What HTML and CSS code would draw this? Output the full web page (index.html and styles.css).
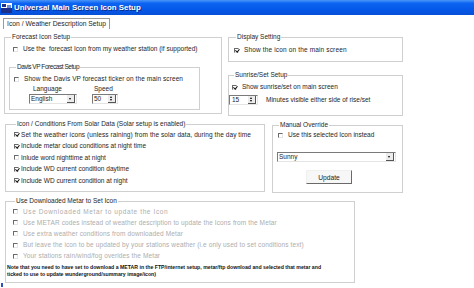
FILE: index.html
```html
<!DOCTYPE html>
<html lang="en">
<head>
    <meta charset="UTF-8">
    <title>Universal Main Screen Icon Setup</title>
    <link rel="stylesheet" href="styles.css">
</head>
<body>
    <div class="titlebar">
        <svg class="app-icon" width="11" height="10" viewBox="0 0 11 10">
            <rect x="0" y="0" width="11" height="10" fill="#fff"/>
            <rect x="0" y="5" width="11" height="5" fill="#1c2f8a"/>
            <path d="M1 1 L5 1 L5 4 L1 4 Z" fill="#1c2f8a"/>
            <path d="M6 2 L10 2 L10 5 L6 5 Z" fill="#6b8fd8"/>
        </svg>
        <span class="title">Universal Main Screen Icon Setup</span>
    </div>

    <div class="tabs">
        <div class="tab">Icon / Weather Description Setup</div>
    </div>

    <div class="main">
        <div class="row row-top">
            <fieldset class="group forecast">
                <legend>Forecast Icon Setup</legend>
                <div class="check wide"><span class="cb"></span>Use the &nbsp;forecast Icon from my weather station (if supported)</div>

                <fieldset class="group davis">
                    <legend>Davis VP Forecast Setup</legend>
                    <div class="check wide"><span class="cb"></span>Show the Davis VP forecast ticker on the main screen</div>
                    <div class="davis-controls">
                        <div class="ctl ctl-lang">
                            <div class="ctl-label">Language</div>
                            <div class="combo lang"><span class="combo-text">English</span><span class="drop"></span></div>
                        </div>
                        <div class="ctl ctl-speed">
                            <div class="ctl-label">Speed</div>
                            <div class="spin speed"><span class="combo-text">50</span><span class="spin-btn"></span></div>
                        </div>
                    </div>
                </fieldset>
            </fieldset>

            <div class="col-right">
                <fieldset class="group display">
                    <legend>Display Setting</legend>
                    <div class="check wide"><span class="cb on"></span>Show the icon on the main screen</div>
                </fieldset>
                <fieldset class="group sunrise">
                    <legend>Sunrise/Set Setup</legend>
                    <div class="check wide"><span class="cb on"></span>Show sunrise/set on main screen</div>
                    <div class="spin-row">
                        <div class="spin minutes"><span class="combo-text">15</span><span class="spin-btn"></span></div>
                        <span>Minutes visible either side of rise/set</span>
                    </div>
                </fieldset>
            </div>
        </div>

        <div class="row row-mid">
            <fieldset class="group solar">
                <legend>Icon / Conditions From Solar Data (Solar setup is enabled)</legend>
                <div class="check"><span class="cb on"></span>Set the weather icons (unless raining) from the solar data, during the day time</div>
                <div class="check"><span class="cb on"></span>Include metar cloud conditions at night time</div>
                <div class="check"><span class="cb"></span>Inlude word nighttime at night</div>
                <div class="check"><span class="cb on"></span>Include WD current condition daytime</div>
                <div class="check"><span class="cb on"></span>Include WD current condition at night</div>
            </fieldset>

            <fieldset class="group manual">
                <legend>Manual Override</legend>
                <div class="check wide"><span class="cb"></span>Use this selected Icon instead</div>
                <div class="combo sunny"><span class="combo-text">Sunny</span><span class="drop"></span></div>
                <button class="update">Update</button>
            </fieldset>
        </div>

        <fieldset class="group metar">
            <legend>Use Downloaded Metar to Set Icon</legend>
            <div class="check wide off spaced"><span class="cb"></span>Use Downloaded Metar to update the Icon</div>
            <div class="check wide off"><span class="cb"></span>Use METAR codes instead of weather description to update the Icons from the Metar</div>
            <div class="check wide off"><span class="cb"></span>Use extra weather conditions from downloaded Metar</div>
            <div class="check wide off"><span class="cb"></span>But leave the icon to be updated by your stations weather (i.e only used to set conditions text)</div>
            <div class="check wide off"><span class="cb"></span>Your stations rain/wind/fog overides the Metar</div>
            <p class="note">Note that you need to have set to download a METAR in the FTP/internet setup, metar/ftp download and selected that metar and<br>ticked to use to update wunderground/summary image/icon)</p>
        </fieldset>
    </div>
    <div class="corner-mark"></div>
</body>
</html>
```

FILE: styles.css
```css
body {
    margin: 0;
    width: 474px;
    height: 288px;
    overflow: hidden;
    background: #fff;
    font-family: "Liberation Sans", Arial, sans-serif;
    font-size: 6.5px;
    line-height: 8px;
    color: #1e1e1e;
    position: relative;
}

.titlebar {
    height: 15px;
    display: flex;
    align-items: center;
    padding-left: 1px;
    background: linear-gradient(#4a95f8 0, #0c63f1 22%, #0559ea 60%, #0650d6 100%);
}
.app-icon {
    display: block;
    margin-right: 2px;
}
.title {
    color: #fff;
    font-weight: bold;
    font-size: 7.9px;
    text-shadow: 1px 1px 0 #0a2a8a;
}

.tabs {
    height: 18px;
    padding: 3px 0 0 3px;
    box-sizing: border-box;
}
.tab {
    display: inline-block;
    height: 11px;
    line-height: 10px;
    padding: 0 3px;
    border: 1px solid #9a9a9a;
    border-bottom: none;
    box-sizing: border-box;
    font-size: 6.75px;
}

.main {
    padding-left: 4px;
}
.row {
    display: flex;
    align-items: flex-start;
}

.group {
    margin: 0;
    padding: 0;
    min-width: 0;
    border: 1px solid #cfcfcf;
    box-sizing: border-box;
}
.group legend {
    padding: 0 1px;
    margin-left: 2px;
    line-height: 8px;
}

.check {
    display: flex;
    align-items: center;
    height: 8px;
    white-space: nowrap;
}
.cb {
    width: 5px;
    height: 5px;
    flex: none;
    margin-right: 2px;
    border-top: 1px solid #6a6a6a;
    border-left: 1px solid #6a6a6a;
    border-right: 1px solid #e6e6e6;
    border-bottom: 1px solid #e6e6e6;
    box-sizing: border-box;
    position: relative;
    background: #fff;
}
.cb.on::after {
    content: "";
    position: absolute;
    left: 1px;
    top: -1px;
    width: 1.5px;
    height: 3px;
    border-right: 1px solid #111;
    border-bottom: 1px solid #111;
    transform: rotate(40deg);
}
.check.wide .cb {
    margin-right: 5px;
}
.check.off {
    color: #adadad;
    letter-spacing: 0.12px;
}
.check.off.spaced {
    letter-spacing: 0.6px;
}

/* top row */
.forecast {
    width: 218px;
    height: 81px;
    padding: 0 4px;
}
.forecast > .check {
    margin-top: 4px;
    margin-left: 4px;
}
.davis {
    width: 191px;
    height: 47px;
    margin-top: 10px;
    padding: 0 4px;
}
.davis legend {
    letter-spacing: -0.45px;
}
.davis > .check {
    margin-top: 4px;
    letter-spacing: 0.08px;
}
.davis-controls {
    display: flex;
    margin-top: 2px;
    margin-left: 15px;
}
.ctl-label {
    height: 8px;
}
.ctl-lang .ctl-label {
    padding-left: 4px;
}
.ctl-speed {
    margin-left: 15px;
}
.ctl-speed .ctl-label {
    padding-left: 2px;
}

.combo, .spin {
    display: flex;
    align-items: center;
    height: 10px;
    margin-top: 1px;
    border-top: 1px solid #7a7a7a;
    border-left: 1px solid #7a7a7a;
    border-right: 1px solid #e4e4e4;
    border-bottom: 1px solid #e4e4e4;
    box-sizing: border-box;
    background: #fff;
}
.combo-text {
    flex: 1;
    padding-left: 1px;
}
.drop, .spin-btn {
    width: 8px;
    height: 8px;
    margin-right: 1px;
    background: #ececec;
    border-right: 1px solid #555;
    border-bottom: 1px solid #555;
    box-sizing: border-box;
    position: relative;
}
.drop::after {
    content: "";
    position: absolute;
    left: 2px;
    top: 3px;
    border-left: 1.5px solid transparent;
    border-right: 1.5px solid transparent;
    border-top: 2px solid #000;
}
.spin-btn::before, .spin-btn::after {
    content: "";
    position: absolute;
    left: 2px;
    border-left: 1.5px solid transparent;
    border-right: 1.5px solid transparent;
}
.spin-btn::before {
    top: 1px;
    border-bottom: 2px solid #000;
}
.spin-btn::after {
    top: 4px;
    border-top: 2px solid #000;
}
.lang {
    width: 48px;
}
.speed {
    width: 26px;
}

.col-right {
    margin-left: 6px;
    width: 175px;
}
.display {
    height: 29px;
    padding: 0 5px;
}
.display .check {
    margin-top: 5px;
    letter-spacing: 0.15px;
}
.sunrise {
    height: 45px;
    margin-top: 9px;
    padding: 0 3px;
}
.sunrise .check {
    margin-top: 4px;
}
.spin-row {
    display: flex;
    align-items: center;
    margin-top: 4px;
    margin-left: -3px;
}
.minutes {
    width: 29px;
    margin-top: 0;
    margin-right: 8px;
}
.minutes .combo-text {
    padding-left: 2px;
}

/* middle row */
.row-mid {
    margin-top: 4px;
    margin-left: 1px;
}
.solar {
    width: 260px;
    height: 72px;
    padding: 0 8px;
}
.solar .check {
    height: 11.5px;
}
.solar .check:first-of-type {
    margin-top: 1px;
    letter-spacing: 0.08px;
}
.manual {
    width: 131px;
    height: 72px;
    margin-left: 7px;
    margin-top: 1px;
    padding: 0 4px;
}
.manual .check {
    margin-top: 2px;
    margin-left: 1px;
}
.sunny {
    width: 119px;
    margin-top: 13px;
    height: 10px;
}
.update {
    display: block;
    width: 46px;
    height: 14px;
    margin: 8px 0 0 29px;
    padding: 0;
    font-family: inherit;
    font-size: 6.7px;
    color: #1e1e1e;
    background: #f7f7f7;
    border: 1px solid;
    border-color: #f0f0f0 #6a6a6a #6a6a6a #f0f0f0;
}

/* metar */
.metar {
    width: 350px;
    height: 86px;
    margin: 4px 0 0 1px;
    padding: 0 7px;
}
.metar .check {
    height: 11.2px;
}
.metar .check:first-of-type {
    margin-top: 1px;
}
.note {
    margin: 2px 0 0 -6px;
    font-size: 5.2px;
    line-height: 7px;
    font-weight: bold;
    white-space: nowrap;
    color: #111;
}

.corner-mark {
    position: absolute;
    left: 1px;
    top: 283px;
    width: 2px;
    height: 4px;
    background: #3050c0;
}
```
